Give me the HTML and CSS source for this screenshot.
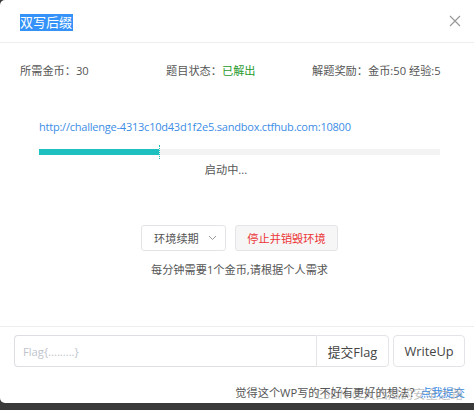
FILE: index.html
```html
<!DOCTYPE html>
<html lang="zh">
<head>
<meta charset="utf-8">
<link rel="stylesheet" href="styles.css">
</head>
<body>
<div class="modal">
  <div class="header">
    <span class="title">双写后缀</span>
    <svg class="close" width="12" height="12" viewBox="0 0 12 12"><path d="M1 1L11 11M11 1L1 11" stroke="#999" stroke-width="1.2" fill="none"/></svg>
  </div>
  <div class="content">
    <div class="info">
      <div class="col">所需金币：30</div>
      <div class="col">题目状态：<span class="green">已解出</span></div>
      <div class="col">解题奖励：金币:50 经验:5</div>
    </div>
    <div class="env">
      <a class="url">http://challenge-4313c10d43d1f2e5.sandbox.ctfhub.com:10800</a>
      <div class="track"><div class="fill" style="width:30%"></div><div class="knob"></div></div>
      <div class="status">启动中...</div>
    </div>
    <div class="actions">
      <button class="btn renew">环境续期 <svg width="9" height="6" viewBox="0 0 9 6"><path d="M1 1L4.5 4.5L8 1" stroke="#999" stroke-width="1" fill="none"/></svg></button>
      <button class="btn stop">停止并销毁环境</button>
    </div>
    <div class="note">每分钟需要1个金币,请根据个人需求</div>
  </div>
  <div class="footer">
    <div class="submit">
      <input class="flag" placeholder="Flag{.........}">
      <button class="btn submitbtn">提交Flag</button>
      <button class="btn wp">WriteUp</button>
    </div>
    <div class="feedback">觉得这个WP写的不好有更好的想法？<span class="link">点我提交</span></div>
  </div>
  <div class="watermark">CSDN @大西瓜的安全之路</div>
</div>
</body>
</html>
```
FILE: styles.css
```css
html, body {
  margin: 0;
  padding: 0;
  background: #3a3a3a;
  overflow: hidden;
  width: 474px;
  height: 410px;
}
body {
  font-family: "Open Sans", "Noto Sans CJK SC", sans-serif;
  font-size: 11.2px;
  color: #515a6e;
}
.modal {
  position: relative;
  width: 479px;
  height: 403px;
  background: #fff;
  border-radius: 5px;
  display: flex;
  flex-direction: column;
}
.header {
  height: 43px;
  border-bottom: 1px solid #eceef0;
  display: flex;
  align-items: center;
  justify-content: space-between;
  padding: 0 14px 0 20px;
  box-sizing: border-box;
}
.title {
  background: #3592f8;
  color: #fff;
  font-size: 13px;
  line-height: 17px;
  padding: 0 1px 0 0;
  margin-top: 2px;
}
.close {
  margin-right: 4px;
}
.content {
  flex: 1;
  display: flex;
  flex-direction: column;
}
.info {
  display: flex;
  padding: 20px 0 0 20px;
  line-height: 16px;
}
.col {
  width: 146px;
  color: #555;
}
.green { color: #1f9a2e; }
.env {
  padding: 40px 39px 0 39px;
  display: flex;
  flex-direction: column;
}
.url {
  color: #3b8de6;
  line-height: 16px;
  font-size: 11px;
  letter-spacing: -0.22px;
}
.track {
  position: relative;
  margin-top: 14px;
  height: 6px;
  background: #f3f3f3;
  width: 401px;
}
.fill {
  height: 100%;
  background: #1ebfbf;
}
.knob {
  position: absolute;
  left: 120px;
  top: -4px;
  height: 14px;
  border-left: 1.5px dotted #1ebfbf;
}
.status {
  text-align: center;
  margin-top: 7px;
  padding-right: 27px;
  line-height: 16px;
  color: #555;
}
.actions {
  display: flex;
  justify-content: center;
  gap: 9px;
  margin-top: 47px;
}
.btn {
  font-family: inherit;
  font-size: 11.2px;
  height: 26px;
  border: 1px solid #e2e4e8;
  border-radius: 3px;
  background: #fff;
  color: #555;
  padding: 0 11px;
  display: flex;
  align-items: center;
  gap: 8px;
  white-space: nowrap;
  box-sizing: border-box;
}
.renew { width: 85px; padding: 0 0 0 12px; gap: 9px; }
.stop { background: #f6f6f6; color: #ec3535; width: 103px; justify-content: center; padding: 0; }
.note {
  text-align: center;
  margin-top: 11px;
  line-height: 16px;
  color: #555;
}
.footer {
  border-top: 1px solid #eceef0;
  padding: 8px 14px 0 14px;
  height: 77px;
  box-sizing: border-box;
}
.submit {
  display: flex;
  height: 32px;
  width: 451px;
}
.flag {
  flex: 1;
  border: 1px solid #dcdee2;
  border-right: none;
  border-radius: 4px 0 0 4px;
  padding: 0 8px;
  font-family: inherit;
  font-size: 11.2px;
  outline: none;
  height: 32px;
  box-sizing: border-box;
}
.flag::placeholder { color: #c0c4cc; }
.submitbtn {
  height: 32px;
  width: 73px;
  border-radius: 0 4px 4px 0;
  font-size: 12.8px;
  justify-content: center;
  padding: 0;
  color: #444;
}
.wp {
  height: 32px;
  width: 72px;
  margin-left: 4px;
  border-radius: 4px;
  font-size: 12.8px;
  justify-content: center;
  padding: 0;
  color: #444;
}
.feedback {
  text-align: right;
  margin-top: 18px;
  width: 451px;
  line-height: 16px;
  color: #555;
  font-size: 11.2px;
}
.link { color: #3b8de6; }
.watermark {
  position: absolute;
  right: 16px;
  bottom: 1px;
  color: rgba(130,130,130,0.5);
  font-size: 12.5px;
  line-height: 14px;
}
```
